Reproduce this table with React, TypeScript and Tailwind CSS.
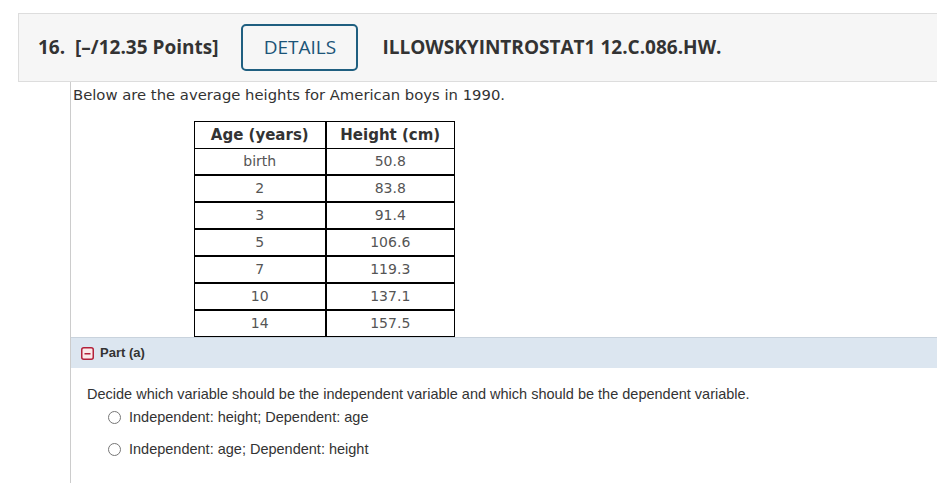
import { useState } from 'react';

const rows = [
  ['birth', '50.8'],
  ['2', '83.8'],
  ['3', '91.4'],
  ['5', '106.6'],
  ['7', '119.3'],
  ['10', '137.1'],
  ['14', '157.5'],
];

const options = ['Independent: height; Dependent: age', 'Independent: age; Dependent: height'];

export default function App() {
  const [picked, setPicked] = useState<number | null>(null);

  return (
    <div className="min-h-screen bg-white pt-[13px]">
      {/* Question header */}
      <div className="ml-[18px] flex h-[69px] items-center border-y border-l border-[#dddddd] bg-[#f6f6f6] pl-[19px] font-['Open_Sans',sans-serif] text-[19px] text-[#333333]">
        <span className="font-bold">16.&nbsp; [–/12.35 Points]</span>
        <button className="ml-[23px] flex h-[47px] w-[117px] items-center justify-center rounded-[5px] border-2 border-[#1f5f80] font-['Open_Sans',sans-serif] text-[19px] font-medium text-[#1b5478]">
          DETAILS
        </button>
        <span className="ml-[24px] font-bold">ILLOWSKYINTROSTAT1 12.C.086.HW.</span>
      </div>

      {/* Question body */}
      <div className="ml-[70px] border-l border-[#cccccc] pb-6">
        <p className="pl-[2px] pt-[3px] font-['DejaVu_Sans',sans-serif] text-[14.8px] leading-[20px] text-[#333333]">
          Below are the average heights for American boys in 1990.
        </p>

        <table className="ml-[123px] mt-[16px] w-[261px] border-collapse border border-black font-['DejaVu_Sans',sans-serif] text-[14px] text-[#555555]">
          <thead>
            <tr className="h-[27px]">
              <th className="w-[131px] border border-black text-[15px] font-bold text-[#333333]">Age (years)</th>
              <th className="border border-black border-l-2 text-[15px] font-bold text-[#333333]">Height (cm)</th>
            </tr>
          </thead>
          <tbody>
            {rows.map(([age, h], i) => (
              <tr key={age} className={i === 0 ? 'h-[26px]' : 'h-[27px] border-t-2 border-black'}>
                <td className="border-x border-black text-center">{age}</td>
                <td className="border-l-2 border-r border-black text-center">{h}</td>
              </tr>
            ))}
          </tbody>
        </table>

        {/* Part (a) */}
        <div className="flex h-[31px] items-center border-t border-[#c9d3dd] bg-[#dce6f0] pl-[10px] font-['Liberation_Sans',sans-serif] text-[13px] font-bold text-[#333333]">
          <svg width="13" height="13" viewBox="0 0 13 13" className="mr-[6px]">
            <rect x="0.75" y="0.75" width="11.5" height="11.5" rx="2" fill="#fbeaea" stroke="#b3213a" strokeWidth="1.5" />
            <rect x="3.5" y="6" width="6" height="1.5" fill="#b3213a" />
          </svg>
          Part (a)
        </div>

        <div className="pl-[16px] pt-[17px] font-['Liberation_Sans',sans-serif] text-[14.5px] text-[#333333]">
          <p className="leading-[18px]">
            Decide which variable should be the independent variable and which should be the dependent variable.
          </p>
          <div className="mt-[5px] flex flex-col gap-[13px] pl-[21px]">
            {options.map((o, i) => (
              <label key={o} className="flex h-[19px] cursor-pointer items-center">
                <input
                  type="radio"
                  name="part-a"
                  checked={picked === i}
                  onChange={() => setPicked(i)}
                  className="m-0 h-[13px] w-[13px] accent-[#555555]"
                />
                <span className="ml-[8px]">{o}</span>
              </label>
            ))}
          </div>
        </div>
      </div>
    </div>
  );
}
